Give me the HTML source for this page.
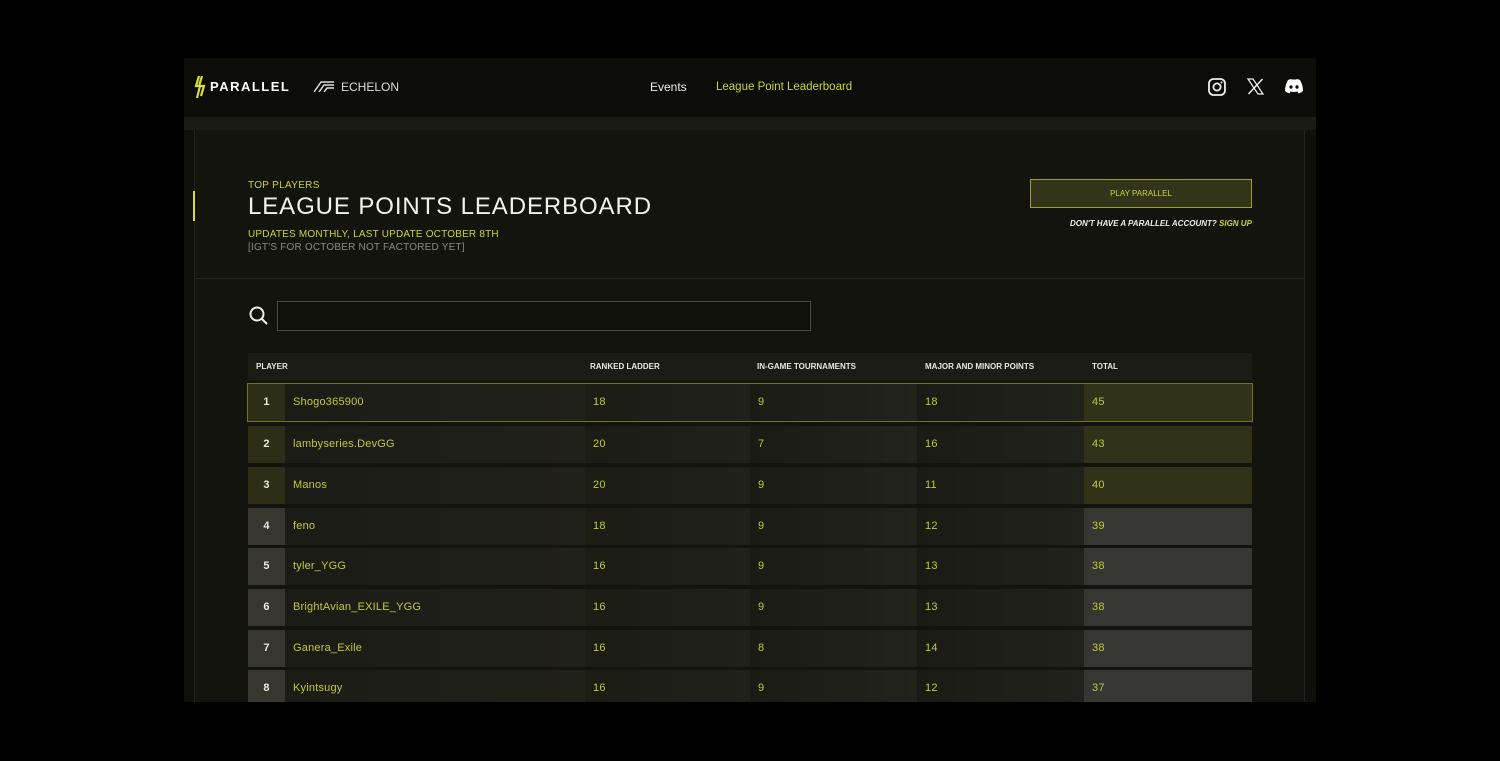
<!DOCTYPE html>
<html><head><meta charset="utf-8"><style>
*{margin:0;padding:0;box-sizing:border-box}
body{width:1500px;height:761px;background:#000;font-family:"Liberation Sans",sans-serif;position:relative;overflow:hidden}
.frame{position:absolute;left:184px;top:58px;width:1132px;height:644px;background:#0f100b;overflow:hidden}
.hdr{position:absolute;left:0;top:0;width:1132px;height:59px;background:#0c0c09}
.strip{position:absolute;left:0;top:59px;width:1132px;height:13px;background:#1a1b14}
.panel{position:absolute;left:10px;top:72px;width:1111px;height:600px;background:#13140d;border-left:1px solid #23241b;border-right:1px solid #23241b}
.a{position:absolute;white-space:nowrap}
.y{color:#c9d43a}
.row{position:absolute;left:64px;width:1004px;height:37px}
.row div{position:absolute;top:0;height:100%;font-size:11px;line-height:37px;letter-spacing:.2px}
.rk{left:0;width:37px;text-align:center;color:#e8e8e0;font-weight:bold}
.c{color:#c0ca3a;padding-left:8px}
</style></head><body>
<div class="frame">
 <div class="hdr">
  <svg class="a" style="left:10px;top:18px" width="12" height="22" viewBox="0 0 12 22"><path d="M5 0 L2 10 L6 10 L3 22 M8 0 L5 10 L10 10 L7 20" stroke="#d6e03a" stroke-width="2.2" fill="none"/></svg>
  <div class="a" style="left:26px;top:21px;color:#fff;font-weight:bold;font-size:13px;letter-spacing:1.5px">PARALLEL</div>
  <svg class="a" style="left:130px;top:23px" width="20" height="11" viewBox="0 0 20 11"><path d="M0 11 L7 1 L20 1 M5 11 L10 4 L20 4 M10 11 L13 7 L20 7" stroke="#ddd" stroke-width="1.5" fill="none"/></svg>
  <div class="a" style="left:157px;top:22px;color:#ddd;font-size:12px;letter-spacing:0">ECHELON</div>
  <div class="a" style="left:466px;top:22px;color:#eee;font-size:12px">Events</div>
  <div class="a y" style="left:532px;top:22px;font-size:11.5px;line-height:14px">League Point Leaderboard</div>
  <svg class="a" style="left:1024px;top:20px" width="18" height="18" viewBox="0 0 18 18"><rect x="1" y="1" width="16" height="16" rx="4.5" stroke="#eee" stroke-width="1.8" fill="none"/><circle cx="9" cy="9" r="3.6" stroke="#eee" stroke-width="1.8" fill="none"/><circle cx="13.5" cy="4.5" r="1" fill="#eee"/></svg>
  <svg class="a" style="left:1063px;top:20px" width="17" height="17" viewBox="0 0 17 17"><path d="M1 1 L6 1 L16 16 L11 16 Z" stroke="#eee" stroke-width="1.2" fill="none"/><path d="M15.5 1 L1.5 16" stroke="#eee" stroke-width="1.5"/></svg>
  <svg class="a" style="left:1100px;top:20px" width="20" height="16" viewBox="0 0 20 16"><path d="M4 2 Q7 0.5 8 1.5 L12 1.5 Q13 0.5 16 2 Q19 7 19 13 Q17 15 14.5 15.5 L13.5 13.5 Q10 14.5 6.5 13.5 L5.5 15.5 Q3 15 1 13 Q1 7 4 2Z" fill="#fff"/><ellipse cx="7" cy="9" rx="1.6" ry="1.8" fill="#0c0c09"/><ellipse cx="13" cy="9" rx="1.6" ry="1.8" fill="#0c0c09"/></svg>
 </div>
 <div class="strip"></div>
 <div class="panel">
  <div class="a" style="left:0;top:148px;width:1109px;height:1px;background:#22231a"></div>
  <div class="a" style="left:-2px;top:61px;width:2px;height:30px;background:#d6e03a"></div>
  <div class="a y" style="left:53px;top:50px;font-size:10px;letter-spacing:.3px">TOP PLAYERS</div>
  <div class="a" style="left:53px;top:63px;color:#f2f2ee;font-size:24px;letter-spacing:.9px">LEAGUE POINTS LEADERBOARD</div>
  <div class="a y" style="left:53px;top:99px;font-size:10px;letter-spacing:.2px">UPDATES MONTHLY, LAST UPDATE OCTOBER 8TH</div>
  <div class="a" style="left:53px;top:112px;font-size:10px;letter-spacing:.2px;color:#888">[IGT'S FOR OCTOBER NOT FACTORED YET]</div>
  <div class="a" style="left:835px;top:49px;width:222px;height:29px;background:#33341a;border:1px solid #9aa135;color:#c9d43a;font-size:8px;text-align:center;line-height:27px">PLAY PARALLEL</div>
  <div class="a" style="left:875px;top:89px;font-size:8px;font-style:italic;font-weight:bold;color:#eee">DON'T HAVE A PARALLEL ACCOUNT? <span class="y">SIGN UP</span></div>
  <svg class="a" style="left:54px;top:176px" width="20" height="20" viewBox="0 0 20 20"><circle cx="8" cy="8" r="6.5" stroke="#eee" stroke-width="2" fill="none"/><path d="M13 13 L18 18" stroke="#eee" stroke-width="2"/></svg>
  <div class="a" style="left:82px;top:171px;width:534px;height:30px;border:1px solid #4a4b40;background:#111209"></div>
 </div>
 <div class="a" style="left:64px;top:295px;width:1004px;height:27px;background:#1b1c16;font-size:8px;color:#e8e8e0;font-weight:bold">
  <span class="a" style="left:8px;top:9px">PLAYER</span><span class="a" style="left:342px;top:9px">RANKED LADDER</span><span class="a" style="left:509px;top:9px">IN-GAME TOURNAMENTS</span><span class="a" style="left:677px;top:9px">MAJOR AND MINOR POINTS</span><span class="a" style="left:844px;top:9px">TOTAL</span>
 </div>
 <div id="rows"></div>
</div>
<script>
const d=[["Shogo365900",18,9,18,45],["lambyseries.DevGG",20,7,16,43],["Manos",20,9,11,40],["feno",18,9,12,39],["tyler_YGG",16,9,13,38],["BrightAvian_EXILE_YGG",16,9,13,38],["Ganera_Exile",16,8,14,38],["Kyintsugy",16,9,12,37]];
const tops=[326,368,409,450,490,531,572,612];
let h="";
d.forEach((r,i)=>{const t=i<3;
h+=`<div class="row" style="top:${tops[i]}px;${i==0?'outline:1px solid #6f7428;':''}">
<div class="rk" style="background:${t?'#2d2e15':'#37372f'}">${i+1}</div>
<div class="c" style="left:37px;width:300px;background:linear-gradient(90deg,#1b1c16,#202119)">${r[0]}</div>
<div class="c" style="left:337px;width:165px;background:linear-gradient(90deg,#1b1c14,#20211b)">${r[1]}</div>
<div class="c" style="left:502px;width:167px;background:linear-gradient(90deg,#1a1b14,#22231d)">${r[2]}</div>
<div class="c" style="left:669px;width:167px;background:linear-gradient(90deg,#1a1b14,#21221c)">${r[3]}</div>
<div class="c" style="left:836px;width:168px;background:${t?'#313217':'#363632'}">${r[4]}</div></div>`;});
document.getElementById('rows').innerHTML=h;
</script>
</body></html>
